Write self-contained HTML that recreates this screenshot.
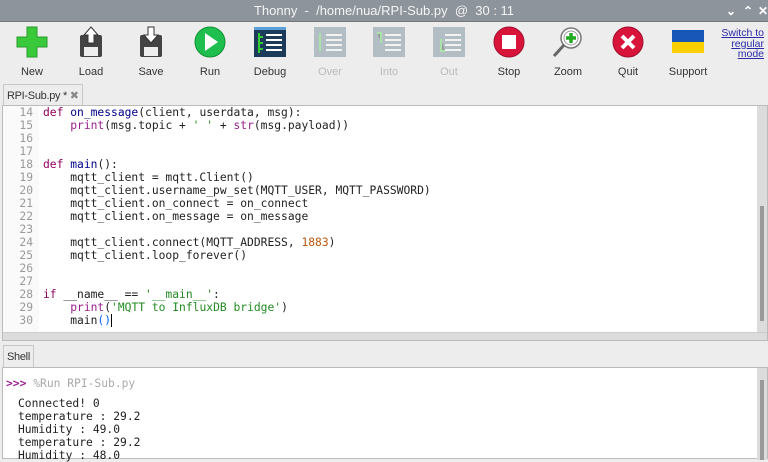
<!DOCTYPE html>
<html><head><style>
*{margin:0;padding:0;box-sizing:border-box}
body{width:768px;height:459px;overflow:hidden;background:#ededed;font-family:"Liberation Sans",sans-serif;position:relative}
.title{position:absolute;left:0;top:0;width:768px;height:22px;background:#8d949b;color:#f4f4f4;font-size:13px;text-align:center;line-height:22px;border-bottom:1px solid #777}
.wc{position:absolute;top:0;color:#fff;font-size:12px;line-height:22px;font-weight:bold}
.tb{position:absolute;top:25px;width:60px;text-align:center;font-size:11px;color:#333}
.tb svg{display:block;margin:0 auto;width:34px;height:34px}
.tb span{display:block;margin-top:7px}
.dis{color:#bbb}
.mono{font-family:"DejaVu Sans Mono","Liberation Mono",monospace;font-size:11.3px}
.ed{position:absolute;left:2px;top:105px;width:766px;height:236px;background:#fff;border:1px solid #bbb;overflow:hidden}
.gut{position:absolute;left:0;top:0;width:36px;height:226px;background:#fafafa;color:#999;text-align:right;padding-right:6px}
.code{position:absolute;left:40px;top:0;color:#222;white-space:pre}
.ln{height:13px;line-height:13px}
.k{color:#900060}.f{color:#00008b}.s{color:#228b22}.n{color:#c05a10}.b{color:#9a2090}.p{color:#0066ff}
.vs{position:absolute;right:0;top:0;width:10px;height:226px;background:#dcdcdc}
.hs{position:absolute;left:0;top:226px;width:766px;height:9px;background:#dcdcdc;border-top:1px solid #ccc}
.tab{position:absolute;background:#ededed;border:1px solid #c8c8c8;border-bottom:none;font-size:11px;color:#333;padding:0 3px;letter-spacing:-0.3px}
.sh{position:absolute;left:2px;top:367px;width:766px;height:92px;background:#fff;border:1px solid #bbb}
</style></head><body>
<div class="title">Thonny &nbsp;- &nbsp;/home/nua/RPI-Sub.py &nbsp;@ &nbsp;30 : 11</div>
<div class="wc" style="left:726px">⌄</div><div class="wc" style="left:743px">⌃</div><div class="wc" style="left:758px">✕</div>

<div class="tb" style="left:2px"><svg viewBox="0 0 34 34"><path d="M12 2h10v10h10v10H22v10H12V22H2V12h10z" fill="#3ac93a" stroke="#2a9a2a"/></svg><span>New</span></div>
<div class="tb" style="left:61px"><svg viewBox="0 0 34 34"><rect x="6" y="10" width="22" height="22" rx="2" fill="#444"/><rect x="10" y="22" width="14" height="9" fill="#eee"/><path d="M17 2l7 8h-4v8h-6v-8h-4z" fill="#fff" stroke="#333"/></svg><span>Load</span></div>
<div class="tb" style="left:121px"><svg viewBox="0 0 34 34"><rect x="6" y="10" width="22" height="22" rx="2" fill="#444"/><rect x="10" y="22" width="14" height="9" fill="#eee"/><path d="M14 2h6v8h4l-7 8-7-8h4z" fill="#fff" stroke="#333"/></svg><span>Save</span></div>
<div class="tb" style="left:180px"><svg viewBox="0 0 34 34"><circle cx="17" cy="17" r="15" fill="#1fbf4f" stroke="#129035"/><path d="M12 8l13 9-13 9z" fill="#fff"/></svg><span>Run</span></div>
<div class="tb" style="left:240px"><svg viewBox="0 0 34 34"><rect x="1" y="2" width="32" height="30" fill="#1c3a5a"/><rect x="1" y="2" width="32" height="3" fill="#5aa0d8"/><path d="M13 10h16M13 15h16M13 20h16M13 25h16" stroke="#fff" stroke-width="2"/><path d="M6 8v20M6 12h4M6 18h4M6 24h4" stroke="#3c3" stroke-width="2"/></svg><span>Debug</span></div>
<div class="tb dis" style="left:300px"><svg viewBox="0 0 34 34" opacity=".35"><rect x="1" y="2" width="32" height="30" fill="#4a6a7a"/><path d="M13 10h16M13 15h16M13 20h16M13 25h16" stroke="#fff" stroke-width="2"/><path d="M7 8v18" stroke="#3c3" stroke-width="2"/></svg><span>Over</span></div>
<div class="tb dis" style="left:359px"><svg viewBox="0 0 34 34" opacity=".35"><rect x="1" y="2" width="32" height="30" fill="#4a6a7a"/><path d="M13 10h16M13 15h16M13 20h16M13 25h16" stroke="#fff" stroke-width="2"/><path d="M5 8h4v10" stroke="#3c3" stroke-width="2"/></svg><span>Into</span></div>
<div class="tb dis" style="left:419px"><svg viewBox="0 0 34 34" opacity=".35"><rect x="1" y="2" width="32" height="30" fill="#4a6a7a"/><path d="M13 10h16M13 15h16M13 20h16M13 25h16" stroke="#fff" stroke-width="2"/><path d="M9 14v12h4" stroke="#3c3" stroke-width="2"/></svg><span>Out</span></div>
<div class="tb" style="left:479px"><svg viewBox="0 0 34 34"><circle cx="17" cy="17" r="15" fill="#d8143a" stroke="#a01030"/><rect x="10" y="10" width="14" height="14" fill="#fff"/></svg><span>Stop</span></div>
<div class="tb" style="left:538px"><svg viewBox="0 0 34 34"><circle cx="20" cy="13" r="10" fill="#fff" stroke="#777" stroke-width="1.5"/><circle cx="20" cy="13" r="7" fill="none" stroke="#999"/><path d="M20 8v10M15 13h10" stroke="#2a2" stroke-width="3.5"/><path d="M13 20L3 31" stroke="#666" stroke-width="3"/></svg><span>Zoom</span></div>
<div class="tb" style="left:598px"><svg viewBox="0 0 34 34"><circle cx="17" cy="17" r="15" fill="#d8143a" stroke="#a01030"/><path d="M11 11l12 12M23 11L11 23" stroke="#fff" stroke-width="4"/></svg><span>Quit</span></div>
<div class="tb" style="left:658px"><svg viewBox="0 0 34 34"><rect x="1" y="5" width="32" height="12" fill="#1857b8"/><rect x="1" y="17" width="32" height="11" fill="#fad000"/></svg><span>Support</span></div>
<div style="position:absolute;right:4px;top:28px;font-size:10.5px;color:#2a2aa8;text-decoration:underline;text-align:right;line-height:10.5px">Switch to<br>regular<br>mode</div>

<div class="tab" style="left:3px;top:84px;height:22px;line-height:22px">RPI-Sub.py * <span style="color:#888">✖</span></div>
<div class="ed mono">
<div class="gut"><div class="ln">14</div><div class="ln">15</div><div class="ln">16</div><div class="ln">17</div><div class="ln">18</div><div class="ln">19</div><div class="ln">20</div><div class="ln">21</div><div class="ln">22</div><div class="ln">23</div><div class="ln">24</div><div class="ln">25</div><div class="ln">26</div><div class="ln">27</div><div class="ln">28</div><div class="ln">29</div><div class="ln">30</div></div>
<div class="code"><div class="ln"><span class="k">def</span> <span class="f">on_message</span>(client, userdata, msg):</div><div class="ln">    <span class="b">print</span>(msg.topic + <span class="s">' '</span> + <span class="b">str</span>(msg.payload))</div><div class="ln"></div><div class="ln"></div><div class="ln"><span class="k">def</span> <span class="f">main</span>():</div><div class="ln">    mqtt_client = mqtt.Client()</div><div class="ln">    mqtt_client.username_pw_set(MQTT_USER, MQTT_PASSWORD)</div><div class="ln">    mqtt_client.on_connect = on_connect</div><div class="ln">    mqtt_client.on_message = on_message</div><div class="ln"></div><div class="ln">    mqtt_client.connect(MQTT_ADDRESS, <span class="n">1883</span>)</div><div class="ln">    mqtt_client.loop_forever()</div><div class="ln"></div><div class="ln"></div><div class="ln"><span class="k">if</span> __name__ == <span class="s">'__main__'</span>:</div><div class="ln">    <span class="b">print</span>(<span class="s">'MQTT to InfluxDB bridge'</span>)</div><div class="ln">    main<span class="p">()</span><span style="border-left:1px solid #000"></span></div></div>
<div class="vs"><div style="position:absolute;left:3px;top:100px;width:4px;height:115px;background:#999"></div></div>
<div class="hs"></div>
</div>

<div class="tab" style="left:3px;top:345px;height:23px;line-height:22px">Shell</div>
<div class="sh mono">
<div style="position:absolute;left:3px;top:9px;line-height:13px"><span style="color:#9a2090;font-weight:bold">&gt;&gt;&gt;</span> <span style="color:#aaa">%Run RPI-Sub.py</span></div>
<div style="position:absolute;left:15px;top:29px;line-height:13px;white-space:pre;color:#222">Connected! 0
temperature : 29.2
Humidity : 49.0
temperature : 29.2
Humidity : 48.0</div>
<div style="position:absolute;right:0;top:0;width:10px;height:92px;background:#dcdcdc"><div style="position:absolute;left:3px;top:12px;width:4px;height:80px;background:#999"></div></div>
</div>
</body></html>
